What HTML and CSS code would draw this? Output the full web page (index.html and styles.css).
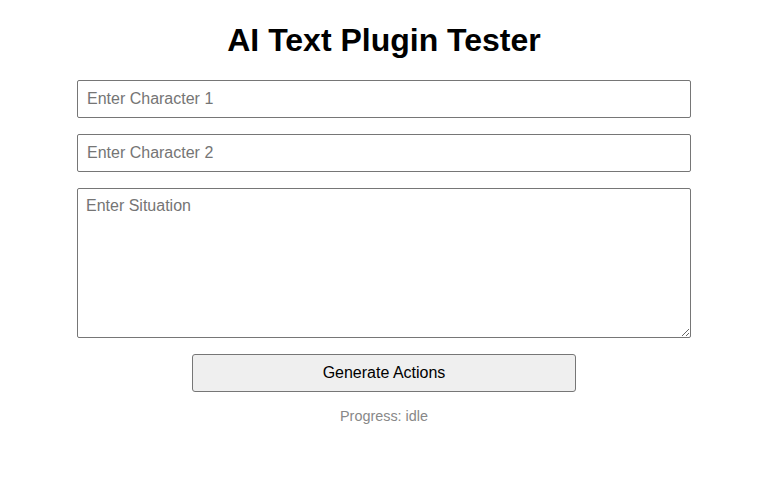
FILE: index.html
```html
<!DOCTYPE html>
<html>
<head>
<meta charset="utf-8">
<link rel="stylesheet" href="styles.css">
</head>
<body>
<main class="app">
  <h1 class="title">AI Text Plugin Tester</h1>
  <input class="field" type="text" placeholder="Enter Character 1">
  <input class="field" type="text" placeholder="Enter Character 2">
  <textarea class="field area" placeholder="Enter Situation"></textarea>
  <button class="btn">Generate Actions</button>
  <p class="progress">Progress: idle</p>
</main>
</body>
</html>
```
FILE: styles.css
```css
html, body {
  margin: 0;
  padding: 0;
  background: #fff;
}
body {
  font-family: "Liberation Sans", Arial, sans-serif;
}
.app {
  display: flex;
  flex-direction: column;
  align-items: center;
  padding-top: 22px;
}
.title {
  margin: 0 0 21px;
  font-size: 32px;
  line-height: 37px;
  font-weight: bold;
  color: #000;
}
.field {
  box-sizing: border-box;
  width: 614px;
  height: 38px;
  margin: 0 0 16px;
  padding: 0 9px;
  border: 1px solid #767676;
  border-radius: 2px;
  font-family: "Liberation Sans", Arial, sans-serif;
  font-size: 16px;
  color: #000;
  background: #fff;
}
.field::placeholder {
  color: #757575;
}
.area {
  height: 150px;
  padding: 8px 8px;
  resize: vertical;
  line-height: 18px;
}
.btn {
  box-sizing: border-box;
  width: 384px;
  height: 38px;
  border: 1px solid #767676;
  border-radius: 3px;
  background: #efefef;
  font-family: "Liberation Sans", Arial, sans-serif;
  font-size: 16px;
  color: #000;
}
.progress {
  margin: 16px 0 0;
  font-size: 14.4px;
  color: #888;
}
```
